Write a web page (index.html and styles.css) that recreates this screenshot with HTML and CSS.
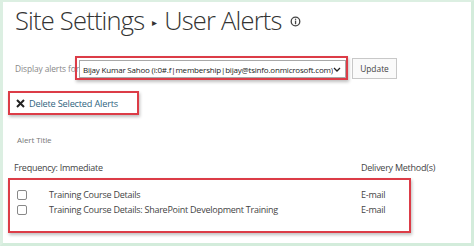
FILE: index.html
```html
<!DOCTYPE html>
<html>
<head>
<meta charset="utf-8">
<link rel="stylesheet" href="styles.css">
</head>
<body>
<div class="frame">
  <div class="page">
    <h1 class="title">Site Settings <span class="crumb">&#9656;</span> User Alerts <span class="info"><svg width="11" height="11" viewBox="0 0 11 11"><circle cx="5.5" cy="5.5" r="4.3" fill="none" stroke="#444" stroke-width="1.3"/><rect x="4.9" y="4.6" width="1.3" height="3.6" fill="#444"/><rect x="4.9" y="2.7" width="1.3" height="1.2" fill="#444"/></svg></span></h1>

    <div class="form-row">
      <span class="label">Display alerts for</span>
      <div class="hl sel-hl">
        <div class="select">
          <span class="sel-text">Bijay Kumar Sahoo (i:0#.f|membership|bijay@tsinfo.onmicrosoft.com)</span>
          <svg class="chev" width="8" height="5" viewBox="0 0 8 5"><path d="M1 1 L4 4 L7 1" fill="none" stroke="#222" stroke-width="1.3"/></svg>
        </div>
      </div>
      <button class="btn">Update</button>
    </div>

    <div class="hl del-hl">
      <svg class="xicon" width="9" height="9" viewBox="0 0 9 9"><path d="M1 1 L8 8 M8 1 L1 8" stroke="#222" stroke-width="2"/></svg>
      <span class="del-text">Delete Selected Alerts</span>
    </div>

    <div class="alert-title">Alert Title</div>

    <div class="freq-row">
      <span class="freq">Frequency: Immediate</span>
      <span class="method-head">Delivery Method(s)</span>
    </div>

    <div class="hl rows-hl">
      <div class="row">
        <span class="cb"></span>
        <span class="name">Training Course Details</span>
        <span class="method">E-mail</span>
      </div>
      <div class="row">
        <span class="cb"></span>
        <span class="name">Training Course Details: SharePoint Development Training</span>
        <span class="method">E-mail</span>
      </div>
    </div>
  </div>
</div>
</body>
</html>
```

FILE: styles.css
```css
html, body {
  margin: 0;
  padding: 0;
  background: #ffffff;
}
body {
  width: 474px;
  height: 246px;
  overflow: hidden;
  font-family: "Open Sans", "Liberation Sans", sans-serif;
}
.frame {
  box-sizing: border-box;
  width: 474px;
  height: 246px;
  border-top: 2px solid #dcefe2;
  border-left: 3px solid #dcefe2;
  border-right: 3px solid #d3ecdb;
  border-bottom: 3px solid #d3ecdb;
  background: #fff;
}
.page {
  padding-left: 12px;
}
.title {
  margin: 0;
  font-weight: 300;
  font-size: 25.5px;
  line-height: 30px;
  color: #333;
  letter-spacing: -0.8px;
  white-space: nowrap;
}
.crumb {
  font-size: 10px;
  vertical-align: 4px;
  color: #333;
  margin: 0 2px;
}
.info {
  display: inline-block;
  vertical-align: 3px;
  margin-left: 3px;
}
.form-row {
  display: flex;
  align-items: center;
  margin-top: 19px;
  height: 24px;
}
.label {
  font-size: 8.4px;
  color: #888;
  letter-spacing: -0.1px;
  white-space: nowrap;
}
.hl {
  border: 2px solid #dc3c47;
  box-shadow: 1px 2px 3px rgba(0,0,0,0.25);
}
.sel-hl {
  box-sizing: border-box;
  height: 24px;
  width: 273px;
  margin-left: -4px;
  padding: 2px;
  display: flex;
}
.select {
  box-sizing: border-box;
  flex: 1;
  height: 18px;
  border: 1px solid #a8a8a8;
  display: flex;
  align-items: center;
  padding-left: 3px;
  padding-right: 4px;
  background: #fff;
}
.sel-text {
  flex: 1;
  font-size: 8px;
  letter-spacing: -0.2px;
  color: #222;
  white-space: nowrap;
  overflow: hidden;
}
.btn {
  margin-left: 4px;
  box-sizing: border-box;
  width: 45px;
  height: 21px;
  border: 1px solid #c8c8c8;
  background: #fafafa;
  font-family: "Open Sans", "Liberation Sans", sans-serif;
  font-size: 8.4px;
  color: #444;
  padding: 0;
}
.del-hl {
  box-sizing: border-box;
  margin-top: 11px;
  margin-left: -7px;
  width: 131px;
  height: 24px;
  display: flex;
  align-items: center;
  padding-left: 6px;
}
.xicon {
  margin-right: 4px;
}
.del-text {
  font-size: 9.2px;
  letter-spacing: -0.2px;
  color: #2f6480;
  white-space: nowrap;
}
.alert-title {
  margin-top: 19px;
  margin-left: 2px;
  font-size: 8px;
  letter-spacing: -0.1px;
  color: #777;
  line-height: 12px;
}
.freq-row {
  display: flex;
  margin-top: 15px;
  line-height: 14px;
  font-size: 9px;
  letter-spacing: -0.25px;
  color: #444;
  white-space: nowrap;
}
.freq {
  margin-left: -1px;
  width: 347px;
}
.rows-hl {
  box-sizing: border-box;
  margin-top: 3px;
  margin-left: -7px;
  width: 403px;
  height: 55px;
  padding-top: 7px;
}
.row {
  display: flex;
  align-items: center;
  height: 15px;
  font-size: 9px;
  letter-spacing: -0.25px;
  color: #444;
}
.cb {
  box-sizing: border-box;
  width: 10px;
  height: 10px;
  border: 1px solid #888;
  border-radius: 2px;
  margin-left: 7px;
  margin-right: 22px;
}
.name {
  width: 312px;
  white-space: nowrap;
}
.method {
  white-space: nowrap;
}
```
